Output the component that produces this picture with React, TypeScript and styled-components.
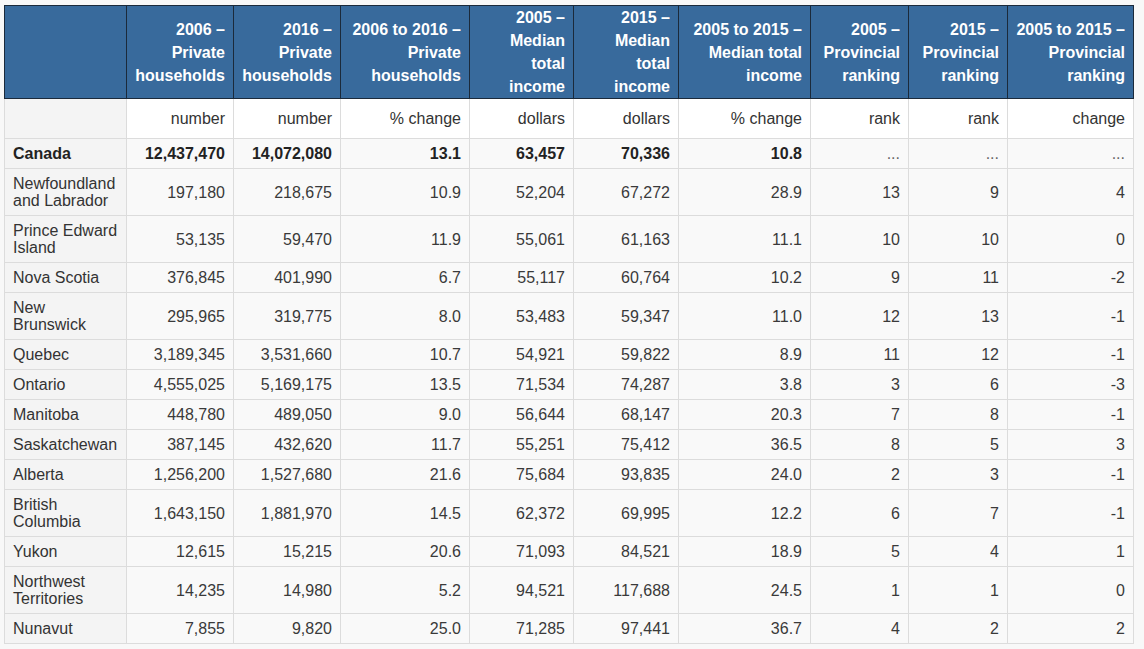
import React from 'react'
import styled, { createGlobalStyle } from 'styled-components'

const GlobalStyle = createGlobalStyle`
  html, body {
    margin: 0;
    padding: 0;
    background-color: #f8f8f8;
    font-family: "Liberation Sans", Arial, sans-serif;
  }
`

const Page = styled.div`
  padding: 5px 0 0 4px;
`

const Table = styled.table`
  border-collapse: collapse;
  table-layout: fixed;
  width: 1129px;
  font-size: 16px;
  color: #333;
`

const HeadCell = styled.th`
  background-color: #386a9c;
  color: #fff;
  font-weight: bold;
  text-align: right;
  vertical-align: middle;
  line-height: 23px;
  padding: 0 8px;
  border: 1px solid #1b2a3b;
`

const UnitCell = styled.td<{ $stub?: boolean }>`
  background-color: ${props => (props.$stub ? '#f4f4f4' : '#fff')};
  text-align: right;
  line-height: 17px;
  padding: 11px 8px;
  border: 1px solid #dcdcdc;
`

const StubCell = styled.th<{ $strong?: boolean }>`
  background-color: #f4f4f4;
  text-align: left;
  font-weight: ${props => (props.$strong ? 'bold' : 'normal')};
  color: ${props => (props.$strong ? '#222' : '#333')};
  line-height: 17px;
  padding: 6px 8px;
  border: 1px solid #dcdcdc;
`

const DataCell = styled.td<{ $strong?: boolean; $muted?: boolean }>`
  background-color: #f9f9f9;
  text-align: right;
  font-weight: ${props => (props.$strong ? 'bold' : 'normal')};
  color: ${props => (props.$muted ? '#666' : props.$strong ? '#222' : '#3a3a3a')};
  line-height: 17px;
  padding: 6px 8px;
  border: 1px solid #dcdcdc;
`

const widths = [122, 107, 107, 129, 104, 105, 132, 98, 99, 126]

const headers = [
  '',
  '2006 – Private households',
  '2016 – Private households',
  '2006 to 2016 – Private households',
  '2005 – Median total income',
  '2015 – Median total income',
  '2005 to 2015 – Median total income',
  '2005 – Provincial ranking',
  '2015 – Provincial ranking',
  '2005 to 2015 – Provincial ranking',
]

const units = ['number', 'number', '% change', 'dollars', 'dollars', '% change', 'rank', 'rank', 'change']

const rows: string[][] = [
  ['Newfoundland and Labrador', '197,180', '218,675', '10.9', '52,204', '67,272', '28.9', '13', '9', '4'],
  ['Prince Edward Island', '53,135', '59,470', '11.9', '55,061', '61,163', '11.1', '10', '10', '0'],
  ['Nova Scotia', '376,845', '401,990', '6.7', '55,117', '60,764', '10.2', '9', '11', '-2'],
  ['New Brunswick', '295,965', '319,775', '8.0', '53,483', '59,347', '11.0', '12', '13', '-1'],
  ['Quebec', '3,189,345', '3,531,660', '10.7', '54,921', '59,822', '8.9', '11', '12', '-1'],
  ['Ontario', '4,555,025', '5,169,175', '13.5', '71,534', '74,287', '3.8', '3', '6', '-3'],
  ['Manitoba', '448,780', '489,050', '9.0', '56,644', '68,147', '20.3', '7', '8', '-1'],
  ['Saskatchewan', '387,145', '432,620', '11.7', '55,251', '75,412', '36.5', '8', '5', '3'],
  ['Alberta', '1,256,200', '1,527,680', '21.6', '75,684', '93,835', '24.0', '2', '3', '-1'],
  ['British Columbia', '1,643,150', '1,881,970', '14.5', '62,372', '69,995', '12.2', '6', '7', '-1'],
  ['Yukon', '12,615', '15,215', '20.6', '71,093', '84,521', '18.9', '5', '4', '1'],
  ['Northwest Territories', '14,235', '14,980', '5.2', '94,521', '117,688', '24.5', '1', '1', '0'],
  ['Nunavut', '7,855', '9,820', '25.0', '71,285', '97,441', '36.7', '4', '2', '2'],
]

const canada = ['12,437,470', '14,072,080', '13.1', '63,457', '70,336', '10.8', '...', '...', '...']

export default function App() {
  return (
    <>
      <GlobalStyle />
      <Page>
        <Table>
          <colgroup>
            {widths.map((w, i) => (
              <col key={i} style={{ width: w }} />
            ))}
          </colgroup>
          <thead>
            <tr>
              {headers.map((h, i) => (
                <HeadCell key={i}>{h}</HeadCell>
              ))}
            </tr>
          </thead>
          <tbody>
            <tr>
              <UnitCell $stub />
              {units.map((u, i) => (
                <UnitCell key={i}>{u}</UnitCell>
              ))}
            </tr>
            <tr>
              <StubCell $strong>Canada</StubCell>
              {canada.map((v, i) =>
                v === '...' ? (
                  <DataCell key={i} $muted>{v}</DataCell>
                ) : (
                  <DataCell key={i} $strong>{v}</DataCell>
                )
              )}
            </tr>
            {rows.map(row => (
              <tr key={row[0]}>
                <StubCell>{row[0]}</StubCell>
                {row.slice(1).map((v, i) => (
                  <DataCell key={i}>{v}</DataCell>
                ))}
              </tr>
            ))}
          </tbody>
        </Table>
      </Page>
    </>
  )
}
